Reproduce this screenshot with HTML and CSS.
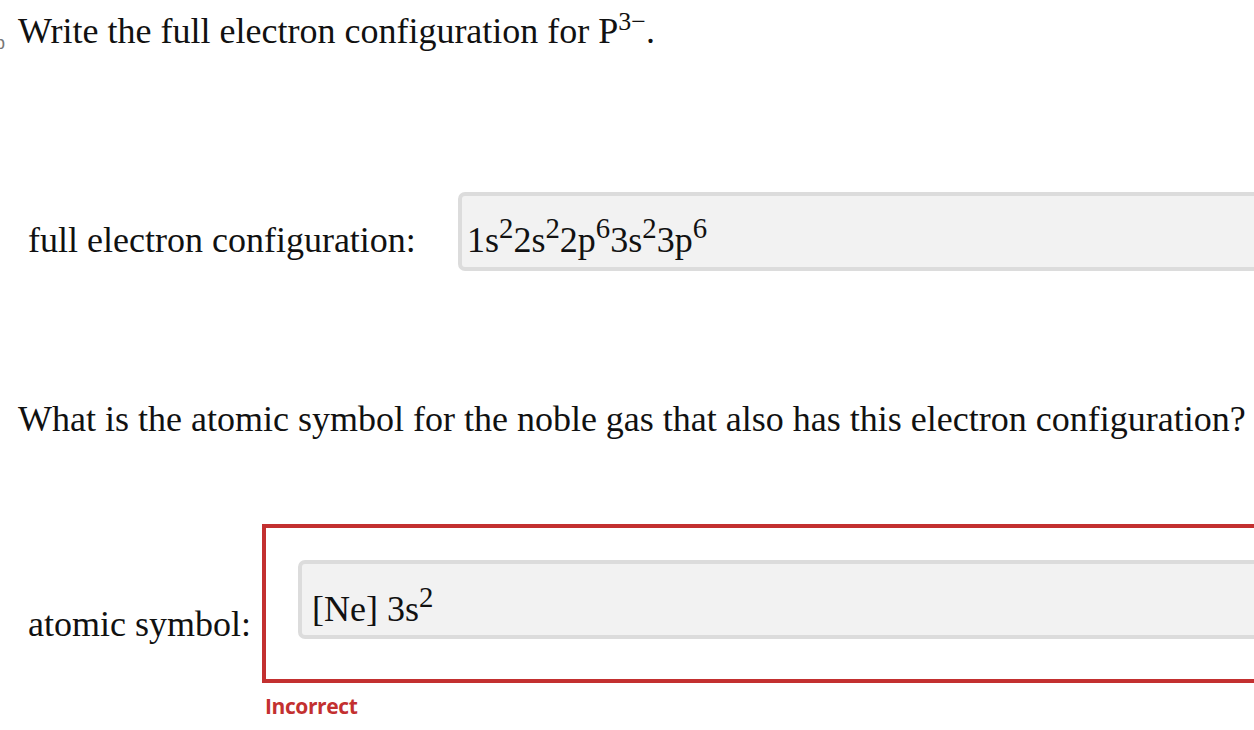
FILE: index.html
```html
<!DOCTYPE html>
<html lang="en">
<head>
    <meta charset="UTF-8">
    <meta name="viewport" content="width=device-width, initial-scale=1.0">
    <title>Electron Configuration</title>
    <link rel="stylesheet" href="styles.css">
</head>
<body>
    <div class="question-block">
        <p class="prompt"><span class="part-mark">b</span>Write the full electron configuration for P<sup>3&minus;</sup>.</p>

        <div class="answer-row config-row">
            <label class="answer-label">full electron configuration:</label>
            <div class="field config-field">1s<sup>2</sup>2s<sup>2</sup>2p<sup>6</sup>3s<sup>2</sup>3p<sup>6</sup></div>
        </div>

        <p class="prompt sub-prompt">What is the atomic symbol for the noble gas that also has this electron configuration?</p>

        <div class="answer-row symbol-row">
            <label class="answer-label symbol-label">atomic symbol:</label>
            <div class="feedback-wrap">
                <div class="feedback-box incorrect">
                    <div class="field symbol-field">[Ne] 3s<sup>2</sup></div>
                </div>
                <span class="feedback-text">Incorrect</span>
            </div>
        </div>
    </div>
</body>
</html>
```

FILE: styles.css
```css
* {
    margin: 0;
    padding: 0;
    box-sizing: border-box;
}

html, body {
    overflow: hidden;
}

body {
    font-family: 'Liberation Serif', 'Times New Roman', serif;
    color: #111;
    background: white;
    width: 1254px;
    height: 730px;
}

.question-block {
    padding-top: 11px;
}

.prompt {
    font-size: 36px;
    line-height: 40px;
    padding-left: 18px;
}

.prompt sup {
    font-size: 0.72em;
    line-height: 0;
    vertical-align: 0.5em;
}

.part-mark {
    position: absolute;
    left: -5px;
    top: 23px;
    font-size: 18px;
    color: #777;
    font-family: 'Liberation Sans', sans-serif;
}

.answer-row {
    display: flex;
    align-items: flex-start;
}

.answer-label {
    font-size: 36px;
    line-height: 40px;
    padding-left: 28px;
}

.config-row {
    margin-top: 141px;
}

.config-row .answer-label {
    width: 458px;
    padding-top: 28px;
}

.field {
    flex: 1;
    height: 79px;
    margin-right: -40px;
    background: #f2f2f2;
    border: 4px solid #dcdcdc;
    border-radius: 7px;
    font-size: 36px;
    line-height: 36px;
    padding: 26px 0 0 5px;
}

.field sup {
    font-size: 0.8em;
    line-height: 0;
    vertical-align: 0.48em;
}

.sub-prompt {
    margin-top: 128px;
}

.symbol-row {
    margin-top: 85px;
}

.symbol-label {
    width: 262px;
    padding-top: 80px;
}

.feedback-wrap {
    flex: 1;
    display: flex;
    flex-direction: column;
    margin-right: -40px;
}

.feedback-box {
    display: flex;
    height: 159px;
    padding: 32px 0 0 32px;
}

.feedback-box.incorrect {
    border: 4px solid #c33030;
}

.symbol-field {
    margin-right: 0;
    padding-left: 10px;
    padding-top: 27px;
}

.feedback-text {
    font-family: 'Open Sans', 'Liberation Sans', sans-serif;
    font-weight: 700;
    font-size: 21px;
    line-height: 24px;
    color: #c33030;
    padding: 11px 0 0 3px;
    letter-spacing: -0.4px;
}
```
